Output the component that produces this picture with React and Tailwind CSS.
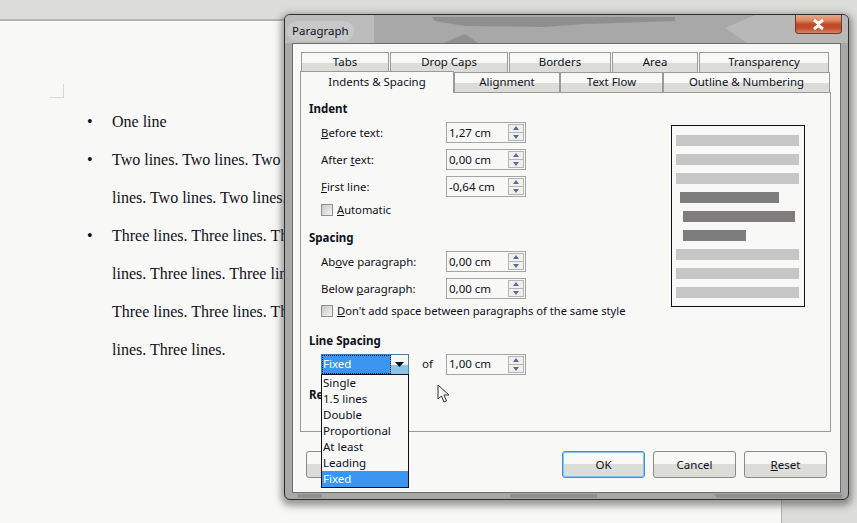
import React from 'react'

const uiFont = { fontFamily: '"Noto Sans", sans-serif' }

function Tab({ w, h = 'h-[20px]', label, active }) {
    return (
        <div className={`${w} ${h} relative border border-[#9a9a9a] border-b-0 pb-[2px] flex items-center justify-center text-[11.4px] text-[#10101c] ${active ? 'bg-[#f8f8f6] z-10' : 'bg-[linear-gradient(#f8f8f6_50%,#dcdcd8_50%)]'}`}>
            {label}
        </div>
    )
}

function Spin({ value, className = '' }) {
    return (
        <div className={`w-[80px] h-[21px] border border-[#a5a5a5] bg-[#f8f8f6] flex items-center justify-between pl-[2px] pr-[1px] text-[11.5px] ${className}`}>
            <span>{value}</span>
            <div className="w-[16px] h-[17px] border border-[#b5b5b5] flex flex-col items-center justify-center gap-[1px] bg-[#f0f0ee]">
                <svg width="8" height="6" viewBox="0 0 8 6"><path d="M4 1 7 5H1z" fill="#5a6a90" /></svg>
                <div className="w-full h-px bg-[#b5b5b5]" />
                <svg width="8" height="6" viewBox="0 0 8 6"><path d="M1 1h6L4 5z" fill="#5a6a90" /></svg>
            </div>
        </div>
    )
}

function FieldRow({ label, value, className = '' }) {
    return (
        <div className={`flex items-center h-[21px] pl-[12px] ${className}`}>
            <span className="w-[125px] text-[11.4px]">{label}</span>
            <Spin value={value} />
        </div>
    )
}

function Check({ label, className = '' }) {
    return (
        <div className={`flex items-center gap-[4px] text-[11.2px] ${className}`}>
            <span className="w-[12px] h-[12px] border border-[#8e8e8e] bg-[linear-gradient(135deg,#c8c8c8,#f4f4f4)] block" />
            <span>{label}</span>
        </div>
    )
}

function Heading({ children, className = '' }) {
    return <div className={`text-[11.5px] font-bold leading-[16px] ${className}`}>{children}</div>
}

function Button({ children, focus, className = '' }) {
    return (
        <div className={`w-[83px] h-[27px] rounded-[3px] border flex items-center justify-center text-[11.5px] bg-[linear-gradient(#f8f8f6_50%,#dcdcd8_50%)] ${focus ? 'border-[#3a8fe0] shadow-[inset_0_0_0_1px_#8ec2ee]' : 'border-[#8a8a8a]'} ${className}`}>
            {children}
        </div>
    )
}

function PreviewBar({ cls }) {
    return <div className={`h-[11px] shrink-0 ${cls}`} />
}

const listItems = ['Single', '1.5 lines', 'Double', 'Proportional', 'At least', 'Leading']

export default function App() {
    return (
        <div className="relative w-[857px] h-[523px] overflow-hidden bg-[#dcdcd8]">
            {/* document behind the dialog */}
            <div className="mt-[19px] w-[782px] h-[504px] border-t-2 border-r border-[#b4b4b0] bg-[#f8f8f6] relative" style={{ fontFamily: '"Liberation Serif", serif' }}>
                <div className="absolute left-[50px] top-[63px] w-[14px] h-[14px] border-r border-b border-[#d8d8d8]" />
                <ul className="pt-[82px] pl-[87px] text-[16px] leading-[38px] text-[#10101c]">
                    <li className="flex"><span className="w-[25px]">•</span>One line</li>
                    <li className="flex"><span className="w-[25px]">•</span><span className="whitespace-nowrap">Two lines. Two lines. Two<br />lines. Two lines. Two lines.</span></li>
                    <li className="flex"><span className="w-[25px]">•</span><span className="whitespace-nowrap">Three lines. Three lines. Th<br />lines. Three lines. Three lin<br />Three lines. Three lines. Th<br />lines. Three lines.</span></li>
                </ul>
            </div>

            {/* dialog window */}
            <div className="absolute left-[284px] top-[14px] w-[565px] h-[486px] rounded-[6px] border border-[#2e2e2e] bg-[#a8a8a8] shadow-[0_3px_7px_3px_rgba(60,60,60,0.5)] text-[#10101c] pt-[28px] px-[7px] pb-[6px]" style={uiFont}>
                {/* aero glass reflections */}
                <svg className="absolute left-0 top-0 rounded-[5px]" width="563" height="484" viewBox="0 0 563 484">
                    <path d="M0 0H89V28H0z" fill="#bcbcbc" />
                    <path d="M470 0H563V28H462L440 13z" fill="#b8b8b8" />
                    <path d="M147 2H390V6L300 9 260 12 180 11 150 6z" fill="#8f8f8f" />
                    <path d="M158 28 180 19 193 28z" fill="#909090" />
                    <path d="M13 479H37V483H13zM225 479H312V483H225zM429 479H557V483H432z" fill="#8f8f8f" />
                </svg>
                <div className="absolute left-[2px] top-[6px] h-[20px] px-[5px] rounded-[10px] bg-[#c8c8c8] text-[11.5px] leading-[20px]">Paragraph</div>
                <div className="absolute right-[6px] top-0 w-[47px] h-[19px] rounded-b-[4px] border border-[#6d3a2c] border-t-0 bg-[linear-gradient(#e6a88f_0%,#dc8a5c_30%,#c24a2c_50%,#c24a2c_72%,#d08a5c_100%)] flex items-center justify-center">
                    <svg width="13" height="11" viewBox="0 0 13 11"><path d="M2 1 6.5 4.5 11 1M2 10 6.5 6.5 11 10" stroke="#fff" strokeWidth="3" fill="none" /></svg>
                </div>

                {/* client area */}
                <div className="relative h-full w-full border border-[#6e6e6e] bg-[#f8f8f6] pt-[8px] pl-[7px] pr-[10px]">
                    <div className="flex pl-[1px] gap-[1px]">
                        <Tab w="w-[88px]" label="Tabs" />
                        <Tab w="w-[118px]" label="Drop Caps" />
                        <Tab w="w-[102px]" label="Borders" />
                        <Tab w="w-[86px]" label="Area" />
                        <Tab w="w-[130px]" label="Transparency" />
                    </div>
                    <div className="flex items-end -mt-[2px] h-[22px]">
                        <Tab w="w-[154px]" h="h-[22px] -mb-px" label="Indents & Spacing" active />
                        <Tab w="w-[106px]" label="Alignment" />
                        <Tab w="w-[103px]" label="Text Flow" />
                        <Tab w="w-[167px]" label="Outline & Numbering" />
                    </div>

                    {/* tab page */}
                    <div className="relative w-[531px] h-[340px] border border-[#9a9a9a] pt-[8px] pl-[8px] flex">
                        <div className="w-[360px]">
                            <Heading>Indent</Heading>
                            <FieldRow className="mt-[5px]" label={<><u>B</u>efore text:</>} value="1,27 cm" />
                            <FieldRow className="mt-[6px]" label={<>After <u>t</u>ext:</>} value="0,00 cm" />
                            <FieldRow className="mt-[6px]" label={<><u>F</u>irst line:</>} value="-0,64 cm" />
                            <Check className="mt-[5px] pl-[12px]" label={<><u>A</u>utomatic</>} />
                            <Heading className="mt-[11px]">Spacing</Heading>
                            <FieldRow className="mt-[5px]" label={<>Ab<u>o</u>ve paragraph:</>} value="0,00 cm" />
                            <FieldRow className="mt-[6px]" label={<>Below <u>p</u>aragraph:</>} value="0,00 cm" />
                            <Check className="mt-[4px] pl-[12px] whitespace-nowrap" label={<><u>D</u>on't add space between paragraphs of the same style</>} />
                            <Heading className="mt-[13px]">Line Spacing</Heading>
                            <div className="flex items-center h-[21px] mt-[5px] pl-[12px]">
                                <div className="w-[88px] h-[21px] border border-[#4a7ea8] flex bg-[#3a96f0]">
                                    <span className="flex-1 border border-dotted border-[#10101c] text-white text-[11.5px] leading-[16px]">Fixed</span>
                                    <span className="w-[17px] flex items-center justify-center bg-[linear-gradient(#f4f8fa_50%,#8cc4e4_50%)]">
                                        <svg width="9" height="5" viewBox="0 0 9 5"><path d="M0 0h9L4.5 5z" fill="#10101c" /></svg>
                                    </span>
                                </div>
                                <span className="w-[37px] pl-[13px] text-[11.5px]">of</span>
                                <Spin value="1,00 cm" />
                            </div>
                            <Heading className="mt-[12px]">Re</Heading>
                        </div>

                        {/* preview */}
                        <div className="ml-[2px] mt-[24px] w-[134px] h-[182px] border border-[#10101c] pt-[9px] px-[4px] flex flex-col gap-[8px]">
                            <PreviewBar cls="bg-[#c6c6c6] w-[123px]" />
                            <PreviewBar cls="bg-[#c6c6c6] w-[123px]" />
                            <PreviewBar cls="bg-[#c6c6c6] w-[123px]" />
                            <PreviewBar cls="bg-[#7e7c7c] w-[99px] ml-[4px]" />
                            <PreviewBar cls="bg-[#7e7c7c] w-[112px] ml-[7px]" />
                            <PreviewBar cls="bg-[#7e7c7c] w-[63px] ml-[7px]" />
                            <PreviewBar cls="bg-[#c6c6c6] w-[123px]" />
                            <PreviewBar cls="bg-[#c6c6c6] w-[123px]" />
                            <PreviewBar cls="bg-[#c6c6c6] w-[123px]" />
                        </div>
                    </div>

                    {/* buttons */}
                    <div className="flex mt-[19px] pl-[6px]">
                        <Button />
                        <Button focus className="ml-[173px]">OK</Button>
                        <Button className="ml-[8px]">Cancel</Button>
                        <Button className="ml-[8px]"><span><u>R</u>eset</span></Button>
                    </div>

                    {/* open list box */}
                    <div className="absolute left-[28px] top-[330px] w-[88px] border border-[#10101c] bg-[#f8f8f6] text-[11.5px] leading-[16px] z-20">
                        {listItems.map(item => (
                            <div key={item} className="pl-[1px]">{item}</div>
                        ))}
                        <div className="pl-[1px] bg-[#3a96f0] text-white">Fixed</div>
                    </div>

                    {/* mouse pointer */}
                    <svg className="absolute left-[144px] top-[340px] z-30" width="13" height="20" viewBox="0 0 13 20">
                        <path d="M1 1v14l3.5-3 2.5 6 2.5-1-2.5-6H12z" fill="#f8f8f6" stroke="#333" strokeWidth="1" />
                    </svg>
                </div>
            </div>
        </div>
    )
}
